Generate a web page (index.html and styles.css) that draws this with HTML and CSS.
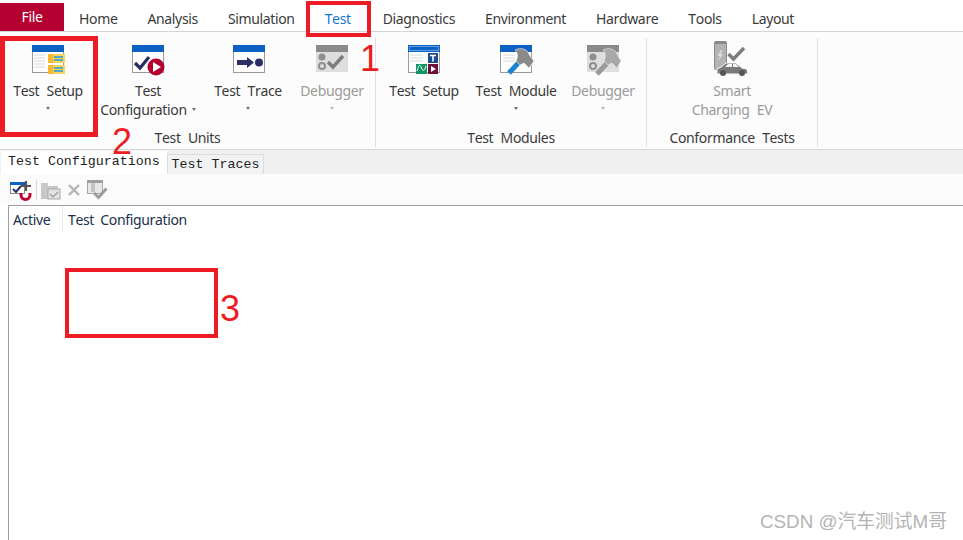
FILE: index.html
```html
<!DOCTYPE html>
<html lang="en">
<head>
<meta charset="utf-8">
<title>Test ribbon</title>
<link rel="stylesheet" href="styles.css">
</head>
<body>
<div class="app">
  <nav class="menubar">
    <div class="menu file">File</div>
    <div class="menu">Home</div>
    <div class="menu">Analysis</div>
    <div class="menu">Simulation</div>
    <div class="menu active">Test</div>
    <div class="menu">Diagnostics</div>
    <div class="menu">Environment</div>
    <div class="menu">Hardware</div>
    <div class="menu">Tools</div>
    <div class="menu">Layout</div>
  </nav>
  <section class="ribbon">
    <div class="group g1">
      <div class="buttons">
        <div class="rbtn w96">
          <svg class="ico" width="34" height="32" viewBox="0 0 34 32"><rect x="1.5" y="2.5" width="31" height="26" fill="#fff" stroke="#9a9a9a"/><rect x="1" y="1" width="32" height="7" fill="#0b62c4"/><path d="M3 11h11M3 14h11M3 17h11M3 20h11M3 23h11" stroke="#d8d8d8"/><rect x="17" y="10" width="17" height="9" fill="#fcd35c"/><rect x="17" y="21" width="17" height="9" fill="#fcd35c"/><rect x="17" y="10" width="5" height="9" fill="#f7b733"/><rect x="17" y="21" width="5" height="9" fill="#f7b733"/><path d="M23 13h9M23 16h9M23 24h9M23 27h9" stroke="#1f9be0" stroke-width="1.6"/></svg>
          <span class="lbl">Test Setup</span>
          <span class="caret"></span>
        </div>
        <div class="rbtn w104">
          <svg class="ico" width="34" height="32" viewBox="0 0 34 32"><rect x="1.5" y="2.5" width="31" height="26" fill="#fff" stroke="#9a9a9a"/><rect x="1" y="1" width="32" height="7" fill="#0b62c4"/><path d="M4 19l5 5 9-11" fill="none" stroke="#2b2f66" stroke-width="3.2"/><circle cx="25" cy="23" r="8.5" fill="#b5002f"/><path d="M22 18l8 5-8 5z" fill="#fff"/></svg>
          <span class="lbl">Test</span>
          <span class="lbl">Configuration<span class="caret inline"></span></span>
        </div>
        <div class="rbtn w96">
          <svg class="ico" width="34" height="32" viewBox="0 0 34 32"><rect x="2.500" y="2.500" width="31" height="26" fill="#fff" stroke="#9a9a9a"/><rect x="2" y="1" width="32" height="7" fill="#0b62c4"/><path d="M6 16h10v-3l7 5.500-7 5.500v-3h-10z" fill="#2b2f66"/><circle cx="28" cy="18.500" r="4" fill="#2b2f66"/></svg>
          <span class="lbl">Test Trace</span>
          <span class="caret"></span>
        </div>
        <div class="rbtn w72 off">
          <svg class="ico" width="34" height="32" viewBox="0 0 34 32"><rect x="1" y="1" width="32" height="27" fill="#dedede"/><rect x="1" y="1" width="32" height="7" fill="#8a8a8a"/><circle cx="7" cy="13" r="3.500" fill="#8f8f8f"/><circle cx="7" cy="22" r="3" fill="none" stroke="#8f8f8f" stroke-width="2"/><path d="M13 18l5 5 10-11" fill="none" stroke="#7d7d7d" stroke-width="3.400"/></svg>
          <span class="lbl">Debugger</span>
          <span class="caret"></span>
        </div>
      </div>
      <div class="gname">Test Units</div>
    </div>
    <div class="group g2">
      <div class="buttons">
        <div class="rbtn w96">
          <svg class="ico" width="34" height="32" viewBox="0 0 34 32"><rect x="1.500" y="2.500" width="31" height="26" fill="#fff" stroke="#9a9a9a"/><rect x="1" y="1" width="32" height="7" fill="#0b62c4"/><rect x="2.500" y="2.500" width="29" height="4" fill="none" stroke="#5f9fe0"/><path d="M3 11h13M3 14h13M3 17h13" stroke="#d8d8d8"/><rect x="21" y="9" width="10" height="10" fill="#1c4c8c"/><path d="M23 11.500h6M26 11.500v6" stroke="#fff" stroke-width="1.600"/><rect x="9" y="20" width="11" height="10" fill="#0f9463"/><path d="M10 27c2-7 3-7 4.500-3s3 3 4.500-2" fill="none" stroke="#fff"/><rect x="21" y="20" width="10" height="10" fill="#6f0f3e"/><path d="M24 22l5 3-5 3z" fill="#fff"/></svg>
          <span class="lbl">Test Setup</span>
        </div>
        <div class="rbtn w88">
          <svg class="ico" width="38" height="32" viewBox="0 0 38 32"><rect x="3.500" y="2.500" width="31" height="26" fill="#fff" stroke="#9a9a9a"/><rect x="3" y="1" width="32" height="7" fill="#0b62c4"/><path d="M6 11h12M6 14h12M6 17h12" stroke="#d8d8d8"/><path d="M12 29l13-14" stroke="#1a84d0" stroke-width="5"/><path d="M18 6c4-2 10-2 13 2l2 4 4 5-5 7-5-5-4 2-4-4c2-4 2-8-1-11z" fill="#8a8a8a" stroke="#fff" stroke-width=".6"/></svg>
          <span class="lbl">Test Module</span>
          <span class="caret"></span>
        </div>
        <div class="rbtn w86 off">
          <svg class="ico" width="38" height="32" viewBox="0 0 38 32"><rect x="3" y="1" width="32" height="27" fill="#dedede"/><rect x="3" y="1" width="32" height="7" fill="#8a8a8a"/><circle cx="9" cy="13" r="3.500" fill="#8f8f8f"/><circle cx="9" cy="22" r="3" fill="none" stroke="#8f8f8f" stroke-width="2"/><path d="M13 30l13-14" stroke="#9a9a9a" stroke-width="5"/><path d="M19 6c4-2 10-2 13 2l2 4 3 5-4 7-5-5-4 2-4-4c2-4 2-8-1-11z" fill="#a8a8a8" stroke="#eee" stroke-width=".6"/></svg>
          <span class="lbl">Debugger</span>
          <span class="caret"></span>
        </div>
      </div>
      <div class="gname">Test Modules</div>
    </div>
    <div class="group g3">
      <div class="buttons">
        <div class="rbtn full off">
          <svg class="ico tall" width="38" height="36" viewBox="0 0 38 36"><rect x="1.500" y="1.500" width="12" height="28" rx="1" fill="#b4b4b4" stroke="#8a8a8a"/><rect x="2" y="1" width="11" height="3" fill="#8a8a8a"/><path d="M8 10l-3.500 6h2.500l-1.500 5 4.500-7h-2.500l2-4z" fill="#dcdcdc"/><path d="M15.500 14l5 5 10.500-11" fill="none" stroke="#7d7d7d" stroke-width="3.400"/><path d="M4 34v-5l4-2 5-4h10l6 5 5 1 1 5z" fill="#7a7a7a" stroke="#fcfcfc"/><path d="M12 27l3-3h4v3zM20 24h3l3 3h-6z" fill="#f4f4f4"/><circle cx="10" cy="33" r="3" fill="#555"/><circle cx="29" cy="33" r="3" fill="#555"/></svg>
          <span class="lbl">Smart</span>
          <span class="lbl">Charging EV</span>
        </div>
      </div>
      <div class="gname">Conformance Tests</div>
    </div>
  </section>
  <div class="tabstrip">
    <div class="tab current">Test Configurations</div>
    <div class="tab">Test Traces</div>
  </div>
  <div class="toolbar">
    <svg class="tool" width="26" height="22" viewBox="0 0 26 22"><rect x="1.500" y="3.500" width="14" height="11" fill="#fff" stroke="#8a8a8a"/><rect x="1" y="3" width="15" height="3" fill="#0b62c4"/><path d="M4 10l3 3 5-6" fill="none" stroke="#2b2f66" stroke-width="2"/><path d="M17 2v10M12 7h10" stroke="#555" stroke-width="2.200"/><path d="M12 14v2a4.500 4.500 0 0 0 9 0v-2" fill="none" stroke="#c4002f" stroke-width="3"/></svg>
    <span class="tsep"></span>
    <svg class="tool open" width="22" height="22" viewBox="0 0 22 22"><path d="M1 4h7v3h10v13h-17z" fill="#c8c8c8"/><rect x="8" y="10" width="12" height="10" fill="#e4e4e4" stroke="#a8a8a8"/><path d="M10 15l3 3 5-5" fill="none" stroke="#a0a0a0" stroke-width="1.500"/></svg>
    <svg class="tool del" width="18" height="22" viewBox="0 0 18 22"><path d="M4 6l10 10M14 6l-10 10" stroke="#b4b4b4" stroke-width="2.400"/></svg>
    <svg class="tool last" width="22" height="22" viewBox="0 0 22 22"><rect x="1.500" y="1.500" width="15" height="13" fill="#e8e8e8" stroke="#a8a8a8"/><rect x="1" y="1" width="16" height="3" fill="#a0a0a0"/><rect x="5" y="4" width="4" height="9" fill="#c4c4c4"/><path d="M8 14l4.500 4.500 8-9" fill="none" stroke="#9a9a9a" stroke-width="2.800"/></svg>
  </div>
  <main class="panel">
    <div class="thead">
      <div class="th active-col">Active</div>
      <div class="th">Test Configuration</div>
    </div>
  </main>
</div>
<div class="mark box1"></div>
<div class="mark box2"></div>
<div class="mark box3"></div>
<div class="num n1">1</div>
<div class="num n2">2</div>
<div class="num n3">3</div>
<div class="watermark">CSDN @汽车测试M哥</div>
</body>
</html>
```
FILE: styles.css
```css
html, body {
  margin: 0;
  padding: 0;
  width: 963px;
  height: 540px;
  overflow: hidden;
  background: #fff;
}
body {
  position: relative;
  font-family: "Noto Sans", "Open Sans", sans-serif;
  font-size: 14px;
  letter-spacing: -0.35px;
  font-kerning: none;
  color: #3a3a3a;
}
.app {
  display: flex;
  flex-direction: column;
  height: 540px;
}
.menubar {
  display: flex;
  height: 28px;
  padding-top: 3px;
  border-bottom: 1px solid #d4d4d4;
  background: #fff;
  flex: none;
}
.menu {
  padding: 0 15px;
  line-height: 31px;
  height: 28px;
}
.menu.file {
  width: 64px;
  box-sizing: border-box;
  padding: 0;
  text-align: center;
  background: #b50032;
  color: #fff;
  line-height: 28px;
}
.menu.active {
  padding-right: 17px;
  color: #1278c8;
}
.ribbon {
  display: flex;
  height: 117px;
  flex: none;
  background: #fcfcfc;
  border-bottom: 1px solid #d8d8d8;
}
.group {
  display: flex;
  flex-direction: column;
  box-sizing: border-box;
  height: 109px;
  margin-top: 6px;
}
.g1 { width: 376px; border-right: 1px solid #e0e0e0; }
.g2 { width: 271px; border-right: 1px solid #e0e0e0; }
.g3 { width: 171px; border-right: 1px solid #e0e0e0; }
.buttons {
  display: flex;
  height: 90px;
  flex: none;
}
.gname {
  text-align: center;
  line-height: 19px;
  word-spacing: 4px;
}
.rbtn {
  display: flex;
  flex-direction: column;
  align-items: center;
  padding-top: 6px;
  box-sizing: border-box;
}
.w72 { width: 72px; }
.w86 { width: 86px; }
.w88 { width: 88px; }
.w96 { width: 96px; }
.w104 { width: 104px; }
.full { width: 100%; }
.ico {
  display: block;
  flex: none;
  margin-bottom: 5px;
}
.ico.tall { margin-top: -4px; }
.lbl {
  line-height: 19px;
  white-space: nowrap;
  word-spacing: 4px;
}
.off .lbl { color: #9a9a9a; }
.caret {
  display: block;
  width: 0;
  height: 0;
  margin-top: 7px;
  border-left: 2.500px solid transparent;
  border-right: 2.500px solid transparent;
  border-top: 3px solid #707070;
}
.off .caret { border-top-color: #b8b8b8; }
.caret.inline {
  display: inline-block;
  margin: 0 0 3px 5px;
  vertical-align: middle;
}
.tabstrip {
  display: flex;
  align-items: flex-end;
  height: 24px;
  flex: none;
  padding-left: 1px;
  background: #f0f0f0;
  font-family: "Liberation Mono", monospace;
  font-size: 13.300px;
  letter-spacing: 0;
  color: #222;
}
.tab {
  box-sizing: border-box;
  height: 20px;
  line-height: 20px;
  padding: 0 4px;
  background: #f2f2f2;
  border: 1px solid #dcdcdc;
  border-bottom: 0;
}
.tab.current {
  height: 23px;
  line-height: 21px;
  padding: 0 7px;
  background: #fff;
  border: 0;
}
.toolbar {
  display: flex;
  align-items: center;
  height: 31px;
  flex: none;
  padding-left: 9px;
  background: #fbfbfb;
}
.tool.open { margin-left: 3px; }
.tool.del { margin-left: 3px; }
.tool.last { margin-left: 3px; }
.tsep {
  width: 1px;
  height: 20px;
  background: #d8d8d8;
  margin-left: 1px;
}
.panel {
  flex: 1;
  margin-left: 8px;
  background: #fff;
  border-left: 1px solid #a0a0a0;
  border-top: 1px solid #a0a0a0;
}
.thead {
  display: flex;
  height: 27px;
  color: #20304a;
  word-spacing: 3px;
}
.th {
  padding-left: 5px;
  line-height: 27px;
}
.active-col {
  box-sizing: border-box;
  width: 54px;
  padding-left: 4px;
  border-right: 1px solid #eaeaea;
}
.mark {
  position: absolute;
  box-sizing: border-box;
  border: 4px solid #ed1c24;
}
.box1 { left: 306px; top: 1px; width: 65px; height: 36px; }
.box2 { left: 0; top: 36px; width: 98px; height: 101px; border-width: 5px; }
.box3 { left: 65px; top: 268px; width: 153px; height: 70px; }
.num {
  position: absolute;
  font-family: "Liberation Sans", sans-serif;
  font-size: 36px;
  line-height: 36px;
  letter-spacing: 0;
  color: #ed1c24;
}
.n1 { left: 360px; top: 41px; }
.n2 { left: 112px; top: 124px; }
.n3 { left: 220px; top: 291px; }
.watermark {
  position: absolute;
  left: 760px;
  top: 509px;
  font-family: "Liberation Sans", "Noto Sans CJK SC", sans-serif;
  font-size: 18.800px;
  letter-spacing: 0;
  line-height: 26px;
  color: #b4b4b4;
  white-space: nowrap;
}
```
